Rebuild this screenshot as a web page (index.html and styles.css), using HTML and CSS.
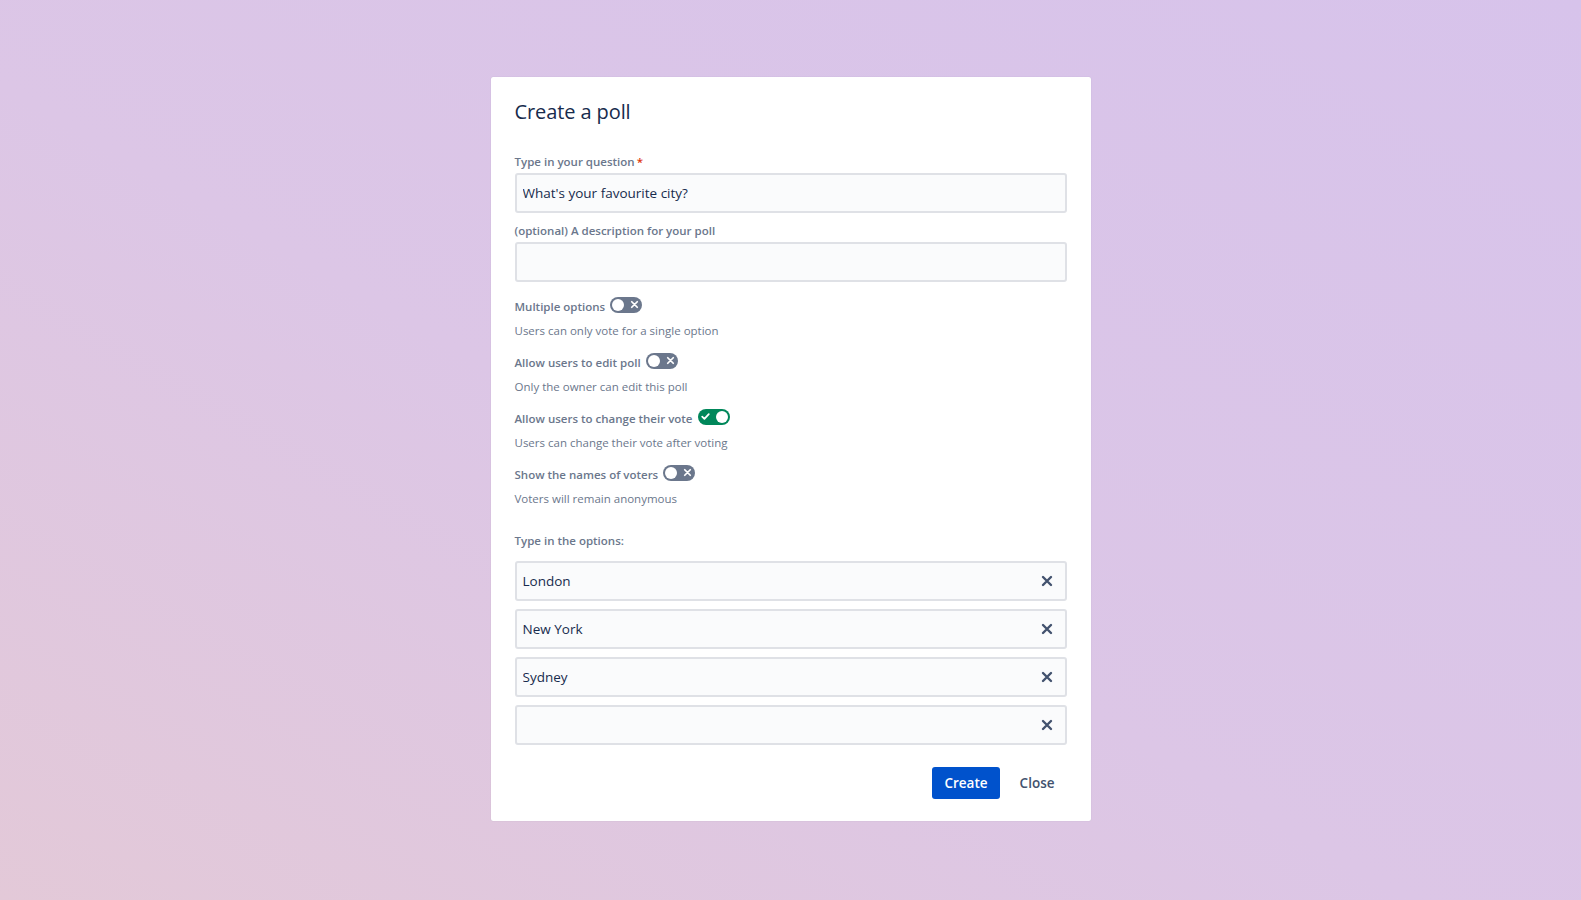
FILE: index.html
```html
<!DOCTYPE html>
<html lang="en">
<head>
    <meta charset="UTF-8">
    <title>Create a poll</title>
    <link rel="stylesheet" href="styles.css">
</head>
<body>

<div class="dialog">
    <h1 class="title">Create a poll</h1>

    <!-- question -->
    <label class="field-label">Type in your question<span class="required">*</span></label>
    <div class="textfield"><input type="text" value="What's your favourite city?"></div>

    <label class="field-label second">(optional) A description for your poll</label>
    <div class="textfield"><input type="text" value=""></div>

    <!-- settings -->
    <div class="settings">
        <div class="setting">
            <div class="setting-head">
                <span class="setting-label">Multiple options</span>
                <span class="toggle">
                    <span class="knob"></span>
                    <svg class="toggle-icon" viewBox="0 0 10 10"><path d="M2.5 2.5l5 5M7.5 2.5l-5 5"/></svg>
                </span>
            </div>
            <div class="setting-desc">Users can only vote for a single option</div>
        </div>
        <div class="setting">
            <div class="setting-head">
                <span class="setting-label">Allow users to edit poll</span>
                <span class="toggle">
                    <span class="knob"></span>
                    <svg class="toggle-icon" viewBox="0 0 10 10"><path d="M2.5 2.5l5 5M7.5 2.5l-5 5"/></svg>
                </span>
            </div>
            <div class="setting-desc">Only the owner can edit this poll</div>
        </div>
        <div class="setting">
            <div class="setting-head">
                <span class="setting-label">Allow users to change their vote</span>
                <span class="toggle on">
                    <svg class="toggle-icon" viewBox="0 0 10 10"><path d="M2 5.2l2 2 4-4.4"/></svg>
                    <span class="knob"></span>
                </span>
            </div>
            <div class="setting-desc">Users can change their vote after voting</div>
        </div>
        <div class="setting">
            <div class="setting-head">
                <span class="setting-label">Show the names of voters</span>
                <span class="toggle">
                    <span class="knob"></span>
                    <svg class="toggle-icon" viewBox="0 0 10 10"><path d="M2.5 2.5l5 5M7.5 2.5l-5 5"/></svg>
                </span>
            </div>
            <div class="setting-desc">Voters will remain anonymous</div>
        </div>
    </div>

    <!-- options -->
    <label class="field-label options-label">Type in the options:</label>
    <div class="options">
        <div class="textfield option"><input type="text" value="London">
            <svg class="remove" viewBox="0 0 24 24"><path d="M8 8l8 8M16 8l-8 8"/></svg></div>
        <div class="textfield option"><input type="text" value="New York">
            <svg class="remove" viewBox="0 0 24 24"><path d="M8 8l8 8M16 8l-8 8"/></svg></div>
        <div class="textfield option"><input type="text" value="Sydney">
            <svg class="remove" viewBox="0 0 24 24"><path d="M8 8l8 8M16 8l-8 8"/></svg></div>
        <div class="textfield option"><input type="text" value="">
            <svg class="remove" viewBox="0 0 24 24"><path d="M8 8l8 8M16 8l-8 8"/></svg></div>
    </div>

    <div class="footer">
        <button class="btn primary">Create</button>
        <button class="btn subtle">Close</button>
    </div>
</div>

</body>
</html>
```

FILE: styles.css
```css
body {
    margin: 0;
    height: 100vh;
    display: flex;
    justify-content: center;
    align-items: center;
    font-family: "Open Sans", "Noto Sans", sans-serif;
    color: #172b4d;
    background: linear-gradient(30deg, #e3c9d8 0%, #dcc6e6 45%, #d7c3eb 100%);
}
.dialog {
    width: 552px;
    margin-bottom: 2px;
    padding: 23px 24px 22px;
    background: #fff;
    border-radius: 2px;
    box-shadow: 0 0 1px rgba(9, 30, 66, 0.2);
    display: flex;
    flex-direction: column;
}
.title {
    margin: 0;
    font-size: 20px;
    line-height: 24px;
    font-weight: 500;
    letter-spacing: -0.1px;
    color: #172b4d;
}
.field-label {
    display: block;
    margin-top: 30px;
    margin-bottom: 3px;
    font-size: 11.5px;
    line-height: 16px;
    font-weight: 600;
    color: #6b778c;
}
.field-label.second {
    margin-top: 10px;
}
.required {
    color: #de350b;
    padding-left: 2px;
}
.textfield {
    box-sizing: border-box;
    height: 40px;
    display: flex;
    align-items: center;
    background: #fafbfc;
    border: 2px solid #dfe1e6;
    border-radius: 3px;
}
.textfield input {
    flex: 1;
    border: none;
    background: transparent;
    outline: none;
    padding: 0 6px;
    font-family: inherit;
    font-size: 13.5px;
    color: #172b4d;
}
.settings {
    margin-top: 17px;
    display: flex;
    flex-direction: column;
    gap: 16px;
}
.setting-head {
    display: flex;
    align-items: center;
    height: 16px;
}
.setting-label {
    font-size: 11.5px;
    line-height: 16px;
    font-weight: 600;
    color: #6b778c;
}
.toggle {
    box-sizing: border-box;
    width: 32px;
    height: 16px;
    margin-left: 5px;
    margin-bottom: 5px;
    padding: 0 2px;
    border-radius: 8px;
    background: #6b778c;
    display: flex;
    align-items: center;
    justify-content: space-between;
}
.toggle.on {
    background: #00875a;
}
.knob {
    width: 12px;
    height: 12px;
    border-radius: 50%;
    background: #fff;
}
.toggle-icon {
    width: 11px;
    height: 11px;
    fill: none;
    stroke: #fff;
    stroke-width: 1.6;
    stroke-linecap: round;
    stroke-linejoin: round;
}
.setting-desc {
    margin-top: 8px;
    font-size: 11.5px;
    line-height: 16px;
    color: #6b778c;
}
.field-label.options-label {
    margin-top: 26px;
    margin-bottom: 12px;
}
.options {
    display: flex;
    flex-direction: column;
    gap: 8px;
}
.remove {
    width: 24px;
    height: 24px;
    margin-right: 6px;
    fill: none;
    stroke: #42526e;
    stroke-width: 2.4;
    stroke-linecap: round;
}
.footer {
    margin-top: 22px;
    display: flex;
    justify-content: flex-end;
    gap: 8px;
}
.btn {
    height: 32px;
    padding: 0 12px;
    border: none;
    border-radius: 3px;
    font-family: inherit;
    font-size: 13.5px;
    font-weight: 600;
    cursor: pointer;
}
.btn.primary {
    background: #0052cc;
    color: #fff;
}
.btn.subtle {
    background: transparent;
    color: #42526e;
}
```
